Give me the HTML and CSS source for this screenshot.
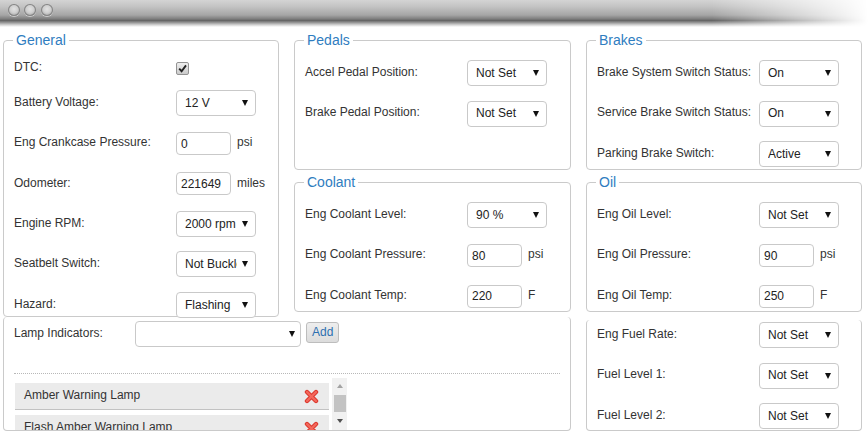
FILE: index.html
```html
<!DOCTYPE html>
<html>
<head>
<meta charset="utf-8">
<title>Vehicle Settings</title>
<link rel="stylesheet" href="styles.css">
</head>
<body>
<div class="titlebar"><span class="dot"></span><span class="dot"></span><span class="dot"></span></div>
<div class="main">
  <div class="left">
    <div class="top">
      <fieldset class="fs general">
        <legend>General</legend>
        <div class="row dtc"><span class="label">DTC:</span><span class="check"><svg width="9" height="9" viewBox="0 0 9 9"><path d="M1.2 4.6L3.6 7.2L8 1.4" fill="none" stroke="#222" stroke-width="1.9"/></svg></span></div>
        <div class="row"><span class="label">Battery Voltage:</span><span class="sel"><select><option>12 V</option></select></span></div>
        <div class="row"><span class="label">Eng Crankcase Pressure:</span><input class="inp" type="text" value="0"><span class="unit">psi</span></div>
        <div class="row"><span class="label">Odometer:</span><input class="inp" type="text" value="221649"><span class="unit">miles</span></div>
        <div class="row"><span class="label">Engine RPM:</span><span class="sel"><select><option>2000 rpm</option></select></span></div>
        <div class="row"><span class="label">Seatbelt Switch:</span><span class="sel"><select><option>Not Buckled</option></select></span></div>
        <div class="row"><span class="label">Hazard:</span><span class="sel"><select><option>Flashing</option></select></span></div>
      </fieldset>
      <div class="stack">
        <fieldset class="fs short">
          <legend>Pedals</legend>
          <div class="row"><span class="label">Accel Pedal Position:</span><span class="sel"><select><option>Not Set</option></select></span></div>
          <div class="row"><span class="label">Brake Pedal Position:</span><span class="sel"><select><option>Not Set</option></select></span></div>
        </fieldset>
        <fieldset class="fs short">
          <legend>Coolant</legend>
          <div class="row"><span class="label">Eng Coolant Level:</span><span class="sel"><select><option>90 %</option></select></span></div>
          <div class="row"><span class="label">Eng Coolant Pressure:</span><input class="inp" type="text" value="80"><span class="unit">psi</span></div>
          <div class="row"><span class="label">Eng Coolant Temp:</span><input class="inp" type="text" value="220"><span class="unit">F</span></div>
        </fieldset>
      </div>
    </div>
    <div class="lamp">
      <div class="row"><span class="label lamp-label">Lamp Indicators:</span><span class="sel wide"><select><option></option></select></span><button class="btn">Add</button></div>
      <div class="sep"></div>
      <div class="list">
        <div class="items">
          <div class="item"><span>Amber Warning Lamp</span><svg class="x" width="15" height="15" viewBox="0 0 15 15"><path d="M3 3L12 12M12 3L3 12" stroke="#dc3b30" stroke-width="4.4" stroke-linecap="round"/><path d="M3 3L12 12M12 3L3 12" stroke="#f4685c" stroke-width="2.2" stroke-linecap="round"/></svg></div>
          <div class="item"><span>Flash Amber Warning Lamp</span><svg class="x" width="15" height="15" viewBox="0 0 15 15"><path d="M3 3L12 12M12 3L3 12" stroke="#dc3b30" stroke-width="4.4" stroke-linecap="round"/><path d="M3 3L12 12M12 3L3 12" stroke="#f4685c" stroke-width="2.2" stroke-linecap="round"/></svg></div>
          <div class="item"><span>Malfunction Indicator Lamp</span><svg class="x" width="15" height="15" viewBox="0 0 15 15"><path d="M3 3L12 12M12 3L3 12" stroke="#dc3b30" stroke-width="4.4" stroke-linecap="round"/></svg></div>
        </div>
        <div class="sbar">
          <div class="sbtn"><span class="tri-up"></span></div>
          <div class="thumb"></div>
          <div class="sbtn down"><span class="tri-down"></span></div>
        </div>
      </div>
    </div>
  </div>
  <div class="right">
    <fieldset class="fs short">
      <legend>Brakes</legend>
      <div class="row"><span class="label">Brake System Switch Status:</span><span class="sel"><select><option>On</option></select></span></div>
      <div class="row"><span class="label">Service Brake Switch Status:</span><span class="sel"><select><option>On</option></select></span></div>
      <div class="row"><span class="label">Parking Brake Switch:</span><span class="sel"><select><option>Active</option></select></span></div>
    </fieldset>
    <fieldset class="fs short">
      <legend>Oil</legend>
      <div class="row"><span class="label">Eng Oil Level:</span><span class="sel"><select><option>Not Set</option></select></span></div>
      <div class="row"><span class="label">Eng Oil Pressure:</span><input class="inp" type="text" value="90"><span class="unit">psi</span></div>
      <div class="row"><span class="label">Eng Oil Temp:</span><input class="inp" type="text" value="250"><span class="unit">F</span></div>
    </fieldset>
    <div class="fuel">
      <div class="row"><span class="label">Eng Fuel Rate:</span><span class="sel"><select><option>Not Set</option></select></span></div>
      <div class="row"><span class="label">Fuel Level 1:</span><span class="sel"><select><option>Not Set</option></select></span></div>
      <div class="row"><span class="label">Fuel Level 2:</span><span class="sel"><select><option>Not Set</option></select></span></div>
    </div>
  </div>
</div>
</body>
</html>
```
FILE: styles.css
```css
* { box-sizing: border-box; }
html, body { margin: 0; background: #fff; }
body {
  font: 12px/1.2 "Liberation Sans", Arial, sans-serif;
  color: #333;
  overflow: hidden;
}
.titlebar {
  height: 27px;
  display: flex;
  gap: 4.5px;
  padding: 3.5px 0 0 7.5px;
  background: linear-gradient(#d4d4d4 0, #c2c2c2 7px, #a6a6a6 15px, #828282 18.5px, #666 20.5px, #959595 22.5px, #d6d6d6 25px, #fff 27px);
  -webkit-mask-image: linear-gradient(to right, #000 0, #000 82%, transparent 100%);
  mask-image: linear-gradient(to right, #000 0, #000 82%, transparent 100%);
}
.dot {
  width: 12px;
  height: 12px;
  border-radius: 50%;
  background: radial-gradient(circle at 50% 42%, #e2e2e2 0, #d0d0d0 40%, #b4b4b4 62%, #8a8a8a 78%, #7a7a7a 100%);
  box-shadow: inset 0 0 0 1px #858585, 0 1px 0 rgba(255,255,255,.5);
}
.main {
  display: flex;
  gap: 15px;
  padding: 5px 0 0 3px;
}
.left { width: 568px; display: flex; flex-direction: column; }
.top { display: flex; gap: 15px; }
.stack { width: 277px; display: flex; flex-direction: column; gap: 4px; }
.right { width: 276px; display: flex; flex-direction: column; gap: 4px; }

.fs {
  margin: 0;
  border: 1px solid #cacaca;
  border-radius: 4px;
  padding: 12px 10px 0;
  min-width: 0;
}
.fs legend {
  padding: 0 3px;
  margin-left: -1px;
  font-size: 14px;
  line-height: 16px;
  color: #2f7dc0;
}
.general { width: 276px; height: 285px; }
.short { height: 138px; }

.row { display: flex; align-items: center; height: 26px; }
.row + .row { margin-top: 14.6px; }
.general .row + .row { margin-top: 14.3px; }
.row.dtc { height: 16px; }
.label { width: 162px; flex: none; padding-bottom: 2px; white-space: nowrap; }

.check {
  width: 13px;
  height: 13px;
  border: 1px solid #939393;
  border-radius: 2px;
  background: linear-gradient(#eeeeee, #cbcbcb);
  display: flex;
  align-items: center;
  justify-content: center;
}

.sel { position: relative; display: inline-block; width: 80px; height: 26px; flex: none; }
.sel select {
  -webkit-appearance: none;
  appearance: none;
  width: 100%;
  height: 100%;
  margin: 0;
  border: 1px solid #c9c9c9;
  border-radius: 4px;
  background: #fff;
  padding: 0 18px 0 8px;
  font: inherit;
  color: #222;
}
.sel::after {
  content: "";
  position: absolute;
  right: 8px;
  top: 10px;
  border-left: 3px solid transparent;
  border-right: 3px solid transparent;
  border-top: 6px solid #111;
  pointer-events: none;
}
.sel.wide { width: 166px; }
.sel.wide::after { right: 6px; }

.inp {
  width: 55px;
  height: 23px;
  margin: 0;
  border: 1px solid #c9c9c9;
  border-radius: 4px;
  padding: 0 4px;
  font: inherit;
  color: #222;
  flex: none;
}
.unit { margin-left: 6px; padding-bottom: 2px; }

.lamp {
  height: 114px;
  border: 1px solid #cacaca;
  border-top: none;
  border-radius: 4px;
  padding: 4px 10px 0;
  display: flex;
  flex-direction: column;
  overflow: hidden;
}
.lamp .row { flex: none; }
.lamp-label { width: 121px; }
.btn {
  align-self: flex-start;
  margin: 1px 0 0 5px;
  height: 21px;
  padding: 0 5px;
  border: 1px solid #bdbdbd;
  border-radius: 3px;
  background: linear-gradient(#eeeeee, #dcdcdc);
  color: #2d6fb0;
  font: inherit;
}
.sep { margin-top: 26px; border-top: 1px dotted #b8b8b8; flex: none; }
.list {
  margin-top: 4px;
  height: 52px;
  width: 333px;
  display: flex;
  gap: 3px;
  flex: none;
  overflow: hidden;
}
.items { width: 315px; overflow: hidden; padding-left: 1px; }
.item {
  margin-top: 5px;
  height: 27px;
  background: #ebebeb;
  border-bottom: 1px solid #c2c2c2;
  display: flex;
  align-items: center;
  justify-content: space-between;
  padding: 0 10px 1px 9px;
  color: #333;
}
.item .x { margin-top: 2px; }
.sbar {
  width: 15px;
  background: #f1f1f1;
  display: flex;
  flex-direction: column;
  align-items: center;
}
.sbtn { height: 15px; width: 15px; display: flex; align-items: center; justify-content: center; flex: none; }
.sbtn.down { margin-top: auto; margin-bottom: 2px; }
.tri-up { border-left: 3px solid transparent; border-right: 3px solid transparent; border-bottom: 4px solid #a3a3a3; }
.tri-down { border-left: 3px solid transparent; border-right: 3px solid transparent; border-top: 4px solid #505050; }
.thumb { width: 12px; height: 17px; margin-top: 2px; background: #c3c3c3; flex: none; }

.fuel {
  height: 111px;
  margin-top: 4px;
  border: 1px solid #cacaca;
  border-top: none;
  border-radius: 4px;
  padding: 2px 10px 0;
}
```
